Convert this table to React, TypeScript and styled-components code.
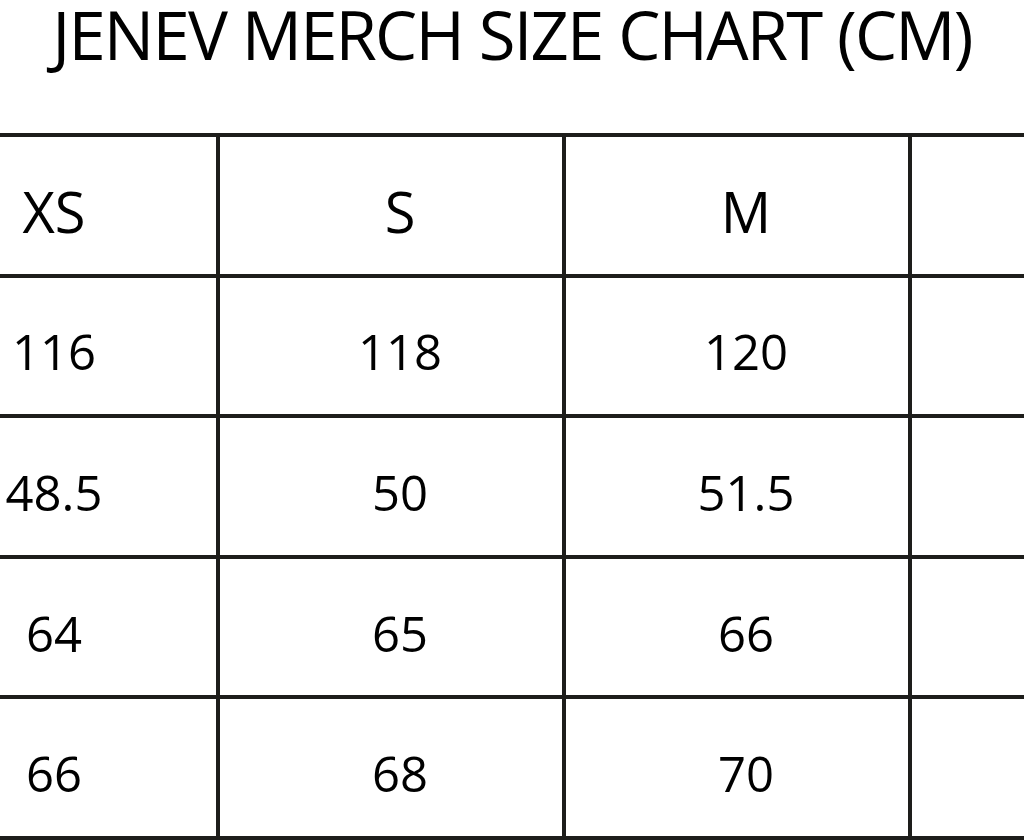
import React from 'react';
import styled, {createGlobalStyle} from 'styled-components';

const GlobalStyle = createGlobalStyle`
  html, body {
    margin: 0;
    padding: 0;
    background: #ffffff;
    overflow: hidden;
  }
  body {
    font-family: 'Open Sans', 'Noto Sans', sans-serif;
    color: #000000;
  }
`;

const Page = styled.div`
  width: 1024px;
  height: 840px;
  overflow: hidden;
  background: #ffffff;
`;

const Title = styled.h1`
  margin: 0;
  height: 133px;
  font-size: 67px;
  font-weight: 400;
  line-height: 68px;
  text-align: center;
  letter-spacing: -1.8px;
  white-space: nowrap;
  color: #000;
`;

const Grid = styled.div<{cols: number}>`
  display: grid;
  grid-template-columns: repeat(${p => p.cols}, 342px);
  grid-auto-rows: 136.6px;
  gap: 4px;
  padding: 4px;
  margin-left: -130px;
  width: max-content;
  background: #1d1d1b;
`;

const Cell = styled.div<{header?: boolean}>`
  display: flex;
  align-items: center;
  justify-content: center;
  padding: 12px 0 0 18px;
  background: #ffffff;
  font-size: ${p => (p.header ? '56px' : '49px')};
  line-height: 1;
  color: #000;
`;

const sizes = ['XS', 'S', 'M', ''];
const rows = [
  ['116', '118', '120', ''],
  ['48.5', '50', '51.5', ''],
  ['64', '65', '66', ''],
  ['66', '68', '70', ''],
];

export default function App() {
  return (
    <Page>
      <GlobalStyle />
      <Title>JENEV MERCH SIZE CHART (CM)</Title>
      <Grid cols={sizes.length}>
        {sizes.map((s, j) => (
          <Cell key={`h-${j}`} header>
            {s}
          </Cell>
        ))}
        {rows.map((row, i) => row.map((v, j) => <Cell key={`${i}-${j}`}>{v}</Cell>))}
      </Grid>
    </Page>
  );
}
